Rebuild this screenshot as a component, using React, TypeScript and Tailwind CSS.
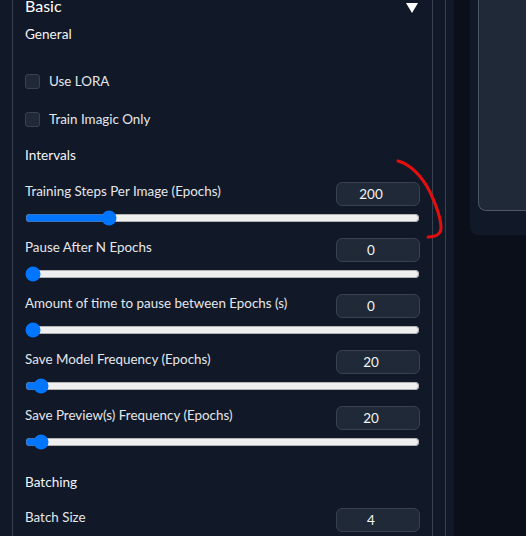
import React from 'react';

const font = { fontFamily: 'Lato, "Noto Sans", sans-serif' };

interface SliderRowProps {
  label: string;
  value: number;
  max: number;
}

const NumberSlider: React.FC<SliderRowProps> = ({ label, value, max }) => (
  <div className="flex flex-col">
    <div className="flex items-start justify-between h-[24px]">
      <span className="text-[13.4px] leading-[20px] mt-[-1px] text-gray-200">{label}</span>
      <div className="w-[84px] h-[24px] rounded-md bg-[#1f2937] border border-[#374151] pl-2 pr-[22px] flex items-center justify-center text-[13.5px] text-gray-100">
        {value}
      </div>
    </div>
    <input
      type="range"
      min={0}
      max={max}
      defaultValue={value}
      className="mt-[4px] h-[16px] w-full m-0 accent-[#0075ff]"
    />
  </div>
);

const Checkbox: React.FC<{ label: string }> = ({ label }) => (
  <div className="flex items-center h-[20px] gap-[9px]">
    <div className="w-[15px] h-[15px] rounded-[3px] bg-[#1f2937] border border-[#374151]" />
    <span className="text-[13.4px] text-gray-200">{label}</span>
  </div>
);

const App: React.FC = () => {
  return (
    <div className="relative flex h-[536px] w-[526px] overflow-hidden bg-[#0b0f19]" style={font}>
      {/* left settings column */}
      <div className="w-[454px] shrink-0 bg-[#111827] pl-3 pr-[8px]">
        <div className="h-full border-r border-[#374151] pr-3">
          <div className="h-full border-x border-[#374151] pl-3 pr-[12px] flex flex-col">
            <div className="flex items-center justify-between h-[24px] mt-[-6px]">
              <span className="text-[16px] text-white">Basic</span>
              <svg width="12" height="10" viewBox="0 0 12 10" className="mr-[2px] mt-[4px]">
                <polygon points="0,0 12,0 6,10" fill="#ffffff" />
              </svg>
            </div>
            <div className="h-[20px] mt-[6px] flex items-center text-[13.6px] text-gray-100">General</div>
            <div className="mt-[27px]">
              <Checkbox label="Use LORA" />
            </div>
            <div className="mt-[18px]">
              <Checkbox label="Train Imagic Only" />
            </div>
            <div className="h-[20px] mt-[16px] flex items-center text-[13.6px] text-gray-100">Intervals</div>
            <div className="mt-[17px] flex flex-col gap-[12px]">
              <NumberSlider label="Training Steps Per Image (Epochs)" value={200} max={1000} />
              <NumberSlider label="Pause After N Epochs" value={0} max={100} />
              <NumberSlider label="Amount of time to pause between Epochs (s)" value={0} max={3600} />
              <NumberSlider label="Save Model Frequency (Epochs)" value={20} max={1000} />
              <NumberSlider label="Save Preview(s) Frequency (Epochs)" value={20} max={1000} />
            </div>
            <div className="h-[20px] mt-[22px] flex items-center text-[13.6px] text-gray-100">Batching</div>
            <div className="mt-[16px]">
              <NumberSlider label="Batch Size" value={4} max={200} />
            </div>
          </div>
        </div>
      </div>

      {/* right column */}
      <div className="flex-1 pl-4">
        <div className="h-[235px] bg-[#111827] rounded-bl-lg pl-2 pb-6">
          <div className="h-full bg-[#1f2937] border-l border-b border-[#4b5563] rounded-bl-lg" />
        </div>
      </div>

      {/* hand-drawn annotation */}
      <svg className="absolute left-0 top-0 pointer-events-none" width="526" height="536">
        <path
          d="M398 161 C 410 164, 422 176, 430 192 C 436 205, 441 218, 441 228 C 441 235, 434 237, 428 237"
          fill="none"
          stroke="#e30f0f"
          strokeWidth="3"
          strokeLinecap="round"
        />
      </svg>
    </div>
  );
};

export default App;
